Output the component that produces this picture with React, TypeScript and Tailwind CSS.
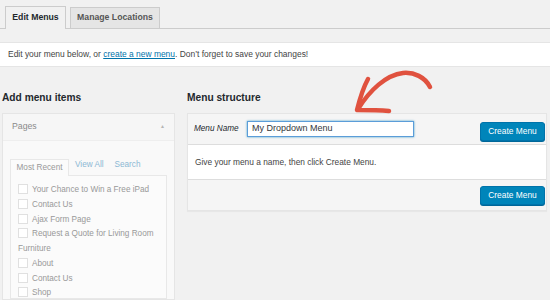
import React from 'react';

const pages = [
  'Your Chance to Win a Free iPad',
  'Contact Us',
  'Ajax Form Page',
  'Request a Quote for Living Room Furniture',
  'About',
  'Contact Us',
  'Shop',
];

function CreateButton() {
  return (
    <button
      type="button"
      className="h-[19px] w-[65px] rounded-[3px] border border-[#0073aa] bg-[#0085ba] text-[8.4px] text-white shadow-[0_1px_0_#006799]"
    >
      Create Menu
    </button>
  );
}

function Arrow() {
  return (
    <svg
      className="pointer-events-none absolute left-0 top-0"
      width="550"
      height="300"
      viewBox="0 0 550 300"
      fill="none"
    >
      <g stroke="#e0523f" strokeWidth="4.5" strokeLinecap="round" strokeLinejoin="round">
        <path d="M430 87 C425 77 414 72 403 73 C386 75 370 90 358 109" />
        <path d="M368 79 C363 88 360 98 357 110 C367 110 378 110 389 111" />
      </g>
    </svg>
  );
}

export default function App() {
  return (
    <div className="relative h-[300px] w-[550px] overflow-hidden bg-[#f1f1f1] font-['Liberation_Sans',Arial,sans-serif] text-[#444]">
      {/* Tabs */}
      <div className="flex h-[29px] items-end gap-[4px] border-b border-[#ccc] pl-[5px]">
        <div className="-mb-px flex h-[23px] w-[61px] items-center justify-center border border-b-0 border-[#ccc] bg-[#f1f1f1] text-[8.7px] font-bold text-[#23282d]">
          Edit Menus
        </div>
        <div className="-mb-px flex h-[22px] w-[90px] items-center justify-center border border-[#ccc] bg-[#e5e5e5] text-[8.7px] font-bold text-[#555]">
          Manage Locations
        </div>
      </div>

      {/* Notice */}
      <div className="mt-[13px] flex h-[25px] items-center border-y border-[#e5e5e5] bg-white pl-[8px] text-[8.45px]">
        <span>
          Edit your menu below, or{' '}
          <span className="text-[#0073aa] underline">create a new menu</span>. Don’t forget to save your
          changes!
        </span>
      </div>

      {/* Columns */}
      <div className="mt-[24px] flex">
        {/* Left column */}
        <div className="ml-[2px] w-[173px]">
          <h2 className="h-[22px] text-[10.2px] font-bold leading-[14px] text-[#23282d]">Add menu items</h2>
          <div className="border border-[#e5e5e5] bg-[#f9f9f9]">
            <div className="flex h-[27px] items-center justify-between border-b border-[#eee] bg-[#f6f6f6] pl-[9px] pr-[9px] text-[8.7px] text-[#8a8a8a]">
              <span>Pages</span>
              <span className="text-[5px] text-[#b5b5b5]">▲</span>
            </div>
            <div className="px-[7px] pt-[18px]">
              <div className="flex items-end text-[8.2px]">
                <div className="-mb-px flex h-[17px] w-[59px] items-center justify-center border border-b-0 border-[#e8e8e8] bg-[#fbfbfb] text-[#999]">
                  Most Recent
                </div>
                <span className="ml-[6px] pb-[4px] text-[#8cb8d4]">View All</span>
                <span className="ml-[11px] pb-[4px] text-[#8cb8d4]">Search</span>
              </div>
              <div className="h-[124px] border border-[#e8e8e8] bg-[#fbfbfb] pl-[7px] pr-[6px] pt-[7px] text-[8.2px] leading-[14.7px] text-[#999]">
                {pages.map((p, i) => (
                  <div key={i}>
                    <span className="mr-[4px] inline-block h-[10px] w-[10px] border border-[#e0e0e0] bg-white align-[-2px]" />
                    {p}
                  </div>
                ))}
              </div>
            </div>
          </div>
        </div>

        {/* Right column */}
        <div className="ml-[12px] w-[360px]">
          <h2 className="h-[22px] text-[10.2px] font-bold leading-[14px] text-[#23282d]">Menu structure</h2>
          <div className="border border-[#e5e5e5] shadow-[0_1px_1px_rgba(0,0,0,0.04)]">
            <div className="flex h-[31px] items-center border-b border-[#ddd] bg-[#f5f5f5] pl-[6px] pr-[1px]">
              <span className="w-[53px] text-[8.2px] italic text-[#23282d]">Menu Name</span>
              <div className="flex h-[16px] w-[167px] items-center border border-[#5b9dd9] bg-white pl-[4px] text-[9px] text-[#32373c] shadow-[0_0_2px_rgba(30,140,190,0.8)]">
                My Dropdown Menu
              </div>
              <div className="ml-auto">
                <CreateButton />
              </div>
            </div>
            <div className="flex h-[34px] items-center bg-white pl-[7px] text-[8.35px] text-[#444]">
              Give your menu a name, then click Create Menu.
            </div>
            <div className="flex h-[31px] items-center justify-end border-t border-[#ddd] bg-[#f5f5f5] pr-[1px]">
              <CreateButton />
            </div>
          </div>
        </div>
      </div>

      <Arrow />
    </div>
  );
}
